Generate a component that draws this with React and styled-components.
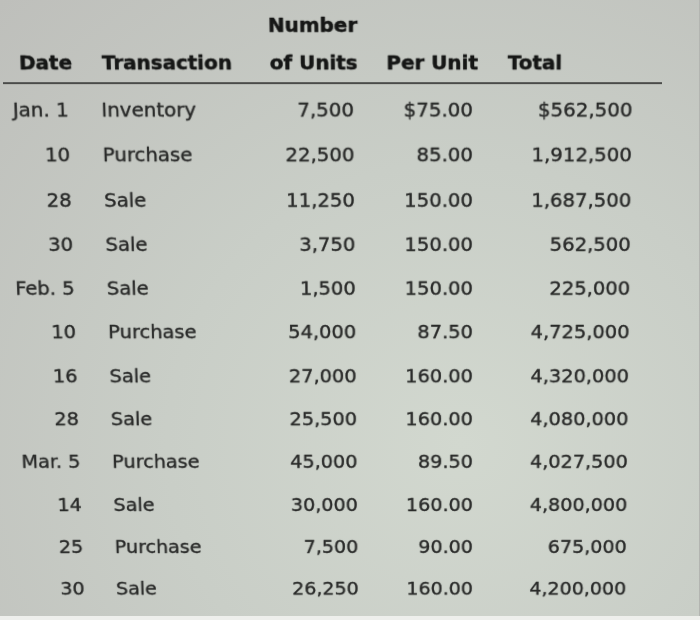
import React from 'react'
import styled, { createGlobalStyle } from 'styled-components'

const GlobalStyle = createGlobalStyle`
  html, body {
    margin: 0;
    padding: 0;
    overflow: hidden;
  }
  body {
    font-family: "DejaVu Sans", Verdana, sans-serif;
  }
`

const Page = styled.div`
  width: 700px;
  height: 620px;
  display: flex;
  flex-direction: column;
  overflow: hidden;
`

const Screen = styled.div`
  flex: 1;
  overflow: hidden;
  background: radial-gradient(ellipse at 66% 72%, #d2d8cf 0%, #c9cec7 45%, #bebfbb 100%);
  border-right: 1px solid #b3b5b1;
`

const BottomEdge = styled.div`
  height: 4px;
  background: #eeefec;
`

// photo is taken at a slight angle, so tilt the whole sheet a bit
const Sheet = styled.div`
  width: 663px;
  transform-origin: 473px 0;
  transform: perspective(1000px) rotateX(-4.67deg);
`

const cols = '90px 160px 110px 120px 183px'

const HeadRow = styled.div`
  display: grid;
  grid-template-columns: ${cols};
  padding-top: 6px;
  padding-bottom: 1px;
  border-bottom: 2px solid #4a4b49;
`

const HeadCell = styled.div`
  align-self: end;
  font-size: 20px;
  font-weight: 700;
  line-height: 38px;
  color: #161716;
  text-align: ${p => p.$align || 'left'};
  padding-left: ${p => p.$pl || 0}px;
  padding-right: ${p => p.$pr || 0}px;
  -webkit-text-stroke: 0.4px #161716;
  text-shadow: 0 0 1.5px rgba(0, 0, 0, 0.3);
`

const Body = styled.div`
  padding-top: 3px;
`

const Row = styled.div`
  display: grid;
  grid-template-columns: ${cols};
  height: 46.3px;
  align-items: center;
`

const Cell = styled.div`
  font-size: 20px;
  line-height: 46.3px;
  color: #2a2b2a;
  white-space: nowrap;
  text-align: ${p => p.$align || 'right'};
  padding-left: ${p => p.$pl || 0}px;
  padding-right: ${p => p.$pr || 0}px;
  -webkit-text-stroke: 0.3px #2a2b2a;
  text-shadow: 0 0 1.5px rgba(0, 0, 0, 0.25);
`

const rows = [
  ['Jan. 1', 'Inventory', '7,500', '$75.00', '$562,500'],
  ['10', 'Purchase', '22,500', '85.00', '1,912,500'],
  ['28', 'Sale', '11,250', '150.00', '1,687,500'],
  ['30', 'Sale', '3,750', '150.00', '562,500'],
  ['Feb. 5', 'Sale', '1,500', '150.00', '225,000'],
  ['10', 'Purchase', '54,000', '87.50', '4,725,000'],
  ['16', 'Sale', '27,000', '160.00', '4,320,000'],
  ['28', 'Sale', '25,500', '160.00', '4,080,000'],
  ['Mar. 5', 'Purchase', '45,000', '89.50', '4,027,500'],
  ['14', 'Sale', '30,000', '160.00', '4,800,000'],
  ['25', 'Purchase', '7,500', '90.00', '675,000'],
  ['30', 'Sale', '26,250', '160.00', '4,200,000'],
]

const App = () => {
  return (
    <Page>
      <GlobalStyle />
      <Screen>
        <Sheet>
          <HeadRow>
            <HeadCell $align="right" $pr={20}>Date</HeadCell>
            <HeadCell $pl={10}>Transaction</HeadCell>
            <HeadCell $align="right" $pr={3}>Number<br />of Units</HeadCell>
            <HeadCell $align="right" $pr={2}>Per Unit</HeadCell>
            <HeadCell $pl={28}>Total</HeadCell>
          </HeadRow>
          <Body>
            {rows.map((r, i) => (
              <Row key={i}>
                <Cell $pr={25}>{r[0]}</Cell>
                <Cell $align="left" $pl={8}>{r[1]}</Cell>
                <Cell $pr={7}>{r[2]}</Cell>
                <Cell $pr={7}>{r[3]}</Cell>
                <Cell $pr={29}>{r[4]}</Cell>
              </Row>
            ))}
          </Body>
        </Sheet>
      </Screen>
      <BottomEdge />
    </Page>
  )
}

export default App
